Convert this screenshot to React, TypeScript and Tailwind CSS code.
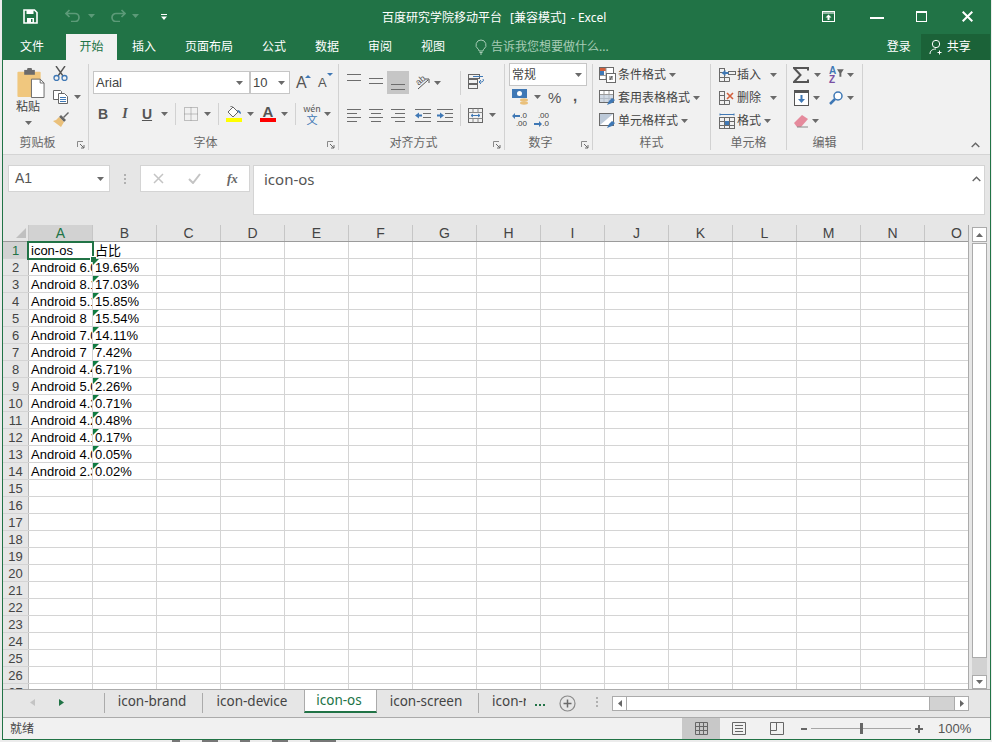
import type { ReactNode } from "react";

const colLetters = ["A", "B", "C", "D", "E", "F", "G", "H", "I", "J", "K", "L", "M", "N", "O"];

const rows = [
  ["icon-os", "占比"],
  ["Android 6.0", "19.65%"],
  ["Android 8.1", "17.03%"],
  ["Android 5.1", "15.85%"],
  ["Android 8", "15.54%"],
  ["Android 7.0", "14.11%"],
  ["Android 7", "7.42%"],
  ["Android 4.4", "6.71%"],
  ["Android 5.0", "2.26%"],
  ["Android 4.3", "0.71%"],
  ["Android 4.2", "0.48%"],
  ["Android 4.1", "0.17%"],
  ["Android 4.0", "0.05%"],
  ["Android 2.3", "0.02%"],
];

function Caret({ className = "", color = "#6a6a6a" }: { className?: string; color?: string }) {
  return (
    <svg width="7" height="4" viewBox="0 0 7 4" className={`shrink-0 ${className}`}>
      <path d="M0 0h7L3.5 4z" fill={color} />
    </svg>
  );
}

function Launcher() {
  return (
    <svg width="8" height="8" viewBox="0 0 8 8" className="absolute right-[3px] bottom-[1px]">
      <path d="M.5 6V.5H6" fill="none" stroke="#8a8a8a" />
      <path d="M3 3l4 4M4 7h3V4" fill="none" stroke="#6a6a6a" />
    </svg>
  );
}

function Lines({ widths, gap = 4, align = "start" }: { widths: number[]; gap?: number; align?: "start" | "center" | "end" }) {
  const w = Math.max(...widths);
  const h = (widths.length - 1) * gap + 1;
  return (
    <svg width={w} height={h} viewBox={`0 0 ${w} ${h}`} className="block">
      {widths.map((lw, i) => {
        const x = align === "start" ? 0 : align === "center" ? (w - lw) / 2 : w - lw;
        return <rect key={i} x={x} y={i * gap} width={lw} height="1" fill="#6d6d6d" />;
      })}
    </svg>
  );
}

function IndentIcon({ dir }: { dir: "left" | "right" }) {
  return (
    <svg width="16" height="13" viewBox="0 0 16 13">
      <path d="M0 .5h16M8 4.5h8M8 8.5h8M0 12.5h16" stroke="#6d6d6d" />
      {dir === "left" ? (
        <path d="M0 6.500l4-3v2h3v2H4v2z" fill="#3f78b5" />
      ) : (
        <path d="M7 6.500l-4-3v2H0v2h3v2z" fill="#3f78b5" />
      )}
    </svg>
  );
}

function Group({ width, children, label, launcher }: { width: string; children: ReactNode; label: string; launcher?: boolean }) {
  return (
    <div className={`relative h-[86px] shrink-0 border-r border-[#d2d2d2] ${width}`}>
      {children}
      <div
        className={`absolute left-0 right-0 bottom-0 h-[14px] flex items-center justify-center text-[12px] leading-none text-[#666666] ${
          launcher ? "pr-[16px]" : ""
        }`}
      >
        {label}
      </div>
      {launcher && <Launcher />}
    </div>
  );
}

function VSep({ h = "h-[22px]" }: { h?: string }) {
  return <div className={`w-px bg-[#d2d2d2] shrink-0 ${h}`} />;
}

function CellIcon({ kind }: { kind: "insert" | "delete" | "format" }) {
  return (
    <svg width="18" height="16" viewBox="0 0 18 16" className="shrink-0">
      <g fill="none" stroke="#6a6a6a">
        {kind === "format" ? (
          <>
            <rect x="1.5" y="4.5" width="15" height="11" />
            <path d="M1.5 8.5h15M1.500 12.5h15M6.5 4.5v11M11.5 4.500v11" />
          </>
        ) : (
          <>
            <rect x="1.5" y="1.5" width="5" height="4" />
            <rect x="1.5" y="10.5" width="5" height="4" />
            <path d="M1.5 6v4M6.500 6v4M6.5 10.5h5v4h-5" />
          </>
        )}
      </g>
      {kind === "insert" && (
        <>
          <rect x="10.5" y="4.5" width="7" height="3" fill="none" stroke="#6a6a6a" />
          <path d="M3.500 6l4-3v2h3v2h-3v2z" fill="#3f78b5" />
        </>
      )}
      {kind === "delete" && <path d="M9 3l6 6M15 3l-6 6" stroke="#d2603c" strokeWidth="1.6" />}
      {kind === "format" && (
        <>
          <rect x="7" y="8" width="4" height="4" fill="#3f78b5" />
          <path d="M2 1.500h14M2 .5v2M16 .5v2" stroke="#3f78b5" />
        </>
      )}
    </svg>
  );
}

function StyleIcon({ kind }: { kind: "cond" | "table" | "cell" }) {
  return (
    <svg width="17" height="16" viewBox="0 0 17 16" className="shrink-0">
      <rect x=".5" y=".5" width="14" height="12" fill="#fff" stroke="#6a6a6a" />
      {kind === "cond" && (
        <>
          <rect x="1" y="1" width="6" height="3" fill="#d2603c" />
          <rect x="1" y="4" width="4" height="4" fill="#3f78b5" />
          <path d="M1 8.500h12M7 1v11" stroke="#9a9a9a" />
          <rect x="7.5" y="6.5" width="9" height="9" fill="#fff" stroke="#6a6a6a" />
          <path d="M10 10h4M10 12h4M13 9l-2 4" stroke="#555" />
        </>
      )}
      {kind === "table" && (
        <>
          <path d="M1 4.500h13M1 8.500h13M5 1v11M10 1v11" stroke="#9a9a9a" />
          <path d="M1 5h13v7H1z" fill="#bcc9d8" opacity=".7" />
          <path d="M8 15l2-4 3-3 3 2-3 3z" fill="#3f78b5" />
        </>
      )}
      {kind === "cell" && (
        <>
          <path d="M1 1h13L1 12z" fill="#bcc9d8" />
          <path d="M8 15l2-4 3-3 3 2-3 3z" fill="#3f78b5" />
        </>
      )}
    </svg>
  );
}

function TitleBar() {
  return (
    <div className="h-[34px] bg-[#217346] flex items-center text-white shrink-0">
      <svg width="15" height="15" viewBox="0 0 15 15" className="ml-[20px] mb-[2px]">
        <path d="M1 1h10.500L14 3.500V14H1z" fill="none" stroke="#fff" strokeWidth="1.6" />
        <rect x="3.5" y="1" width="7" height="4" fill="#fff" />
        <rect x="4" y="9" width="7" height="5" fill="#fff" />
        <rect x="8" y="10" width="1.5" height="3" fill="#217346" />
      </svg>
      <svg width="16" height="13" viewBox="0 0 16 13" className="ml-[27px] mb-[3px]">
        <path d="M4.500 1L1 4.500 4.500 8M1.500 4.500H10a4 4 0 0 1 0 8H6" fill="none" stroke="#5c9a78" strokeWidth="1.7" />
      </svg>
      <Caret color="#5c9a78" className="ml-[7px] mb-[2px]" />
      <svg width="16" height="13" viewBox="0 0 16 13" className="ml-[15px] mb-[3px]">
        <path d="M11.500 1L15 4.500 11.500 8M14.500 4.500H6a4 4 0 0 0 0 8h4" fill="none" stroke="#5c9a78" strokeWidth="1.7" />
      </svg>
      <Caret color="#5c9a78" className="ml-[6px] mb-[2px]" />
      <svg width="6" height="6" viewBox="0 0 6 6" className="ml-[22px] mb-[1px]">
        <rect width="6" height="1" fill="#fff" />
        <path d="M0 2.500h6L3 6z" fill="#fff" />
      </svg>
      <div className="ml-[215px] w-[226px] mt-px flex text-[12px] whitespace-nowrap leading-none">
        <span>百度研究学院移动平台</span>
        <span className="ml-[8px]">[兼容模式]</span>
        <span className="ml-[5px]">- Excel</span>
      </div>
      <svg width="13" height="11" viewBox="0 0 13 11" className="ml-[214px] mb-[2px]">
        <rect x=".5" y=".5" width="12" height="10" fill="none" stroke="#fff" />
        <path d="M1 2h11" stroke="#fff" />
        <path d="M6.500 3.500L3.500 6.500h2V9h2V6.500h2z" fill="#fff" />
      </svg>
      <div className="ml-[35px] w-[14px] h-[2px] bg-white mt-[1px]" />
      <svg width="11" height="11" viewBox="0 0 11 11" className="ml-[32px] mb-[2px]">
        <rect x=".5" y=".5" width="10" height="10" fill="none" stroke="#fff" />
        <rect x="0" y="0" width="11" height="2" fill="#fff" />
      </svg>
      <svg width="11" height="11" viewBox="0 0 11 11" className="ml-[35px] mb-[2px]">
        <path d="M.7.7l9.600 9.600M10.300.7L.7 10.300" stroke="#fff" strokeWidth="2" />
      </svg>
    </div>
  );
}

function TabsRow() {
  const tabs: [string, string][] = [
    ["插入", "ml-[15px]"],
    ["页面布局", "ml-[29px]"],
    ["公式", "ml-[29px]"],
    ["数据", "ml-[29px]"],
    ["审阅", "ml-[29px]"],
    ["视图", "ml-[29px]"],
  ];
  return (
    <div className="h-[26px] bg-[#217346] flex items-center text-white text-[12px] leading-none shrink-0">
      <span className="ml-[17px]">文件</span>
      <div className="ml-[22px] w-[51px] h-[26px] bg-[#f1f1f1] text-[#217346] flex items-center justify-center">开始</div>
      {tabs.map(([t, m]) => (
        <span key={t} className={m}>{t}</span>
      ))}
      <svg width="12" height="16" viewBox="0 0 12 16" className="ml-[30px]">
        <path d="M6 1a5 5 0 0 1 3 9c-.6.5-1 1-1 2H4c0-1-.4-1.500-1-2a5 5 0 0 1 3-9z" fill="none" stroke="#a7ccb6" />
        <path d="M4.500 13.500h3M5 15h2" stroke="#a7ccb6" />
      </svg>
      <span className="ml-[4px] text-[#a7ccb6]">告诉我您想要做什么...</span>
      <span className="ml-[278px]">登录</span>
      <div className="ml-[10px] w-[69px] h-[26px] bg-[#1b6238] flex items-center">
        <svg width="15" height="16" viewBox="0 0 15 16" className="ml-[8px]">
          <circle cx="7" cy="5" r="3.700" fill="none" stroke="#fff" />
          <path d="M1 15c0-3 2-5 6-5M10.500 11.500v4M8.500 13.500h4" fill="none" stroke="#fff" />
        </svg>
        <span className="ml-[3px]">共享</span>
      </div>
    </div>
  );
}

function ClipboardGroup() {
  return (
    <Group width="w-[86px]" label="剪贴板" launcher>
      <div className="flex pl-[13px]">
        <div className="flex flex-col items-start w-[28px] pt-[4px]">
          <svg width="29" height="30" viewBox="0 0 29 31" className="shrink-0">
            <rect x="1" y="4" width="24" height="26" rx="1" fill="#f0c77e" />
            <rect x="8" y="2" width="11" height="5" fill="#6b6b6b" />
            <rect x="11" y="0" width="5" height="4" rx="1" fill="#6b6b6b" />
            <path d="M15.500 11.500h9l4 4v15h-13z" fill="#fff" stroke="#6b6b6b" />
            <path d="M24.500 11.500v4h4" fill="none" stroke="#6b6b6b" />
          </svg>
          <span className="text-[12px] leading-none text-[#444] whitespace-nowrap mt-[3px]">粘贴</span>
          <Caret className="mt-[8px] ml-[9px]" />
        </div>
        <div className="flex flex-col items-start ml-[9px] pt-[2px]">
          <svg width="15" height="15" viewBox="0 0 15 15">
            <path d="M3 0l7 10M12 0L5 10" stroke="#555" strokeWidth="1.4" />
            <circle cx="3.5" cy="12" r="2.500" fill="none" stroke="#3f78b5" strokeWidth="1.3" />
            <circle cx="11.5" cy="12" r="2.500" fill="none" stroke="#3f78b5" strokeWidth="1.3" />
          </svg>
          <div className="flex items-center mt-[9px]">
            <svg width="15" height="14" viewBox="0 0 15 14">
              <path d="M.5.5h7l1 1v8h-8z" fill="#fff" stroke="#666" />
              <path d="M5.500 3.500h6l3 3v7h-9z" fill="#fff" stroke="#666" />
              <path d="M7 7.500h6M7 9.500h6M7 11.500h6" stroke="#3f78b5" />
            </svg>
            <Caret className="ml-[6px]" />
          </div>
          <svg width="16" height="15" viewBox="0 0 16 15" className="mt-[8px]">
            <path d="M10 5l5-5 1 1-5 5z" fill="#666" />
            <path d="M8 3l5 5-2 2-5-5z" fill="#666" />
            <path d="M6 5l5 5-3 5-8-6 3-1z" fill="#eac07a" />
          </svg>
        </div>
      </div>
    </Group>
  );
}

function FontGroup() {
  return (
    <Group width="w-[250px]" label="字体" launcher>
      <div className="flex items-center pt-[7px] pl-[4px]">
        <div className="w-[157px] h-[23px] bg-white border border-[#c6c6c6] flex items-center justify-between pl-[2px] pr-[6px] text-[#444] text-[13px] font-['Liberation_Sans',sans-serif]">
          Arial
          <Caret />
        </div>
        <div className="w-[40px] h-[23px] bg-white border border-[#c6c6c6] flex items-center justify-between pl-[2px] pr-[4px] text-[#444] text-[13px] font-['Liberation_Sans',sans-serif]">
          10
          <Caret />
        </div>
        <span className="relative ml-[6px] w-[15px] text-[#555] text-[16px] leading-none font-['Liberation_Sans',sans-serif]">
          A
          <svg width="6" height="3" viewBox="0 0 6 3" className="absolute left-[9px] top-[0px]"><path d="M0 3h6L3 0z" fill="#3f78b5" /></svg>
        </span>
        <span className="relative ml-[7px] w-[15px] text-[#555] text-[13px] leading-none font-['Liberation_Sans',sans-serif]">
          A
          <svg width="6" height="3" viewBox="0 0 6 3" className="absolute left-[9px] -top-[3px]"><path d="M0 0h6L3 3z" fill="#3f78b5" /></svg>
        </span>
      </div>
      <div className="flex items-center h-[24px] mt-[8px] pl-[3px] text-[#555] text-[14px] font-['Liberation_Sans',sans-serif] leading-none">
        <span className="w-[22px] text-center font-bold">B</span>
        <span className="w-[22px] text-center italic font-['Liberation_Serif',serif] font-bold">I</span>
        <span className="w-[22px] text-center font-bold underline">U</span>
        <Caret className="ml-[3px]" />
        <div className="ml-[7px]"><VSep /></div>
        <svg width="14" height="14" viewBox="0 0 14 14" className="ml-[8px]">
          <path d="M.5.5h13v13H.5zM7 .5v13M.5 7h13" fill="none" stroke="#8a8a8a" strokeDasharray="1 1" />
        </svg>
        <Caret className="ml-[6px]" />
        <div className="ml-[7px]"><VSep /></div>
        <div className="ml-[7px] w-[16px] flex flex-col items-center">
          <svg width="16" height="12" viewBox="0 0 16 12">
            <path d="M2 6l5-5 5 5-5 5z" fill="#fff" stroke="#666" />
            <path d="M5 1V0h2" fill="none" stroke="#666" />
            <path d="M11 4c3 0 4 2 4 4l-2-1z" fill="#3f78b5" />
          </svg>
          <div className="w-[16px] h-[4px] bg-[#ffff00]" />
        </div>
        <Caret className="ml-[5px]" />
        <div className="ml-[6px] w-[16px] flex flex-col items-center">
          <span className="text-[15px] leading-[12px] font-bold text-[#555]">A</span>
          <div className="w-[16px] h-[4px] bg-[#ff0000]" />
        </div>
        <Caret className="ml-[5px]" />
        <div className="ml-[7px]"><VSep /></div>
        <div className="ml-[8px] w-[16px] flex flex-col items-center text-[9px] leading-[10px] text-[#555] font-['Noto_Sans_CJK_SC',sans-serif]">
          <span>wén</span>
          <span className="text-[#3f78b5] text-[11px]">文</span>
        </div>
        <Caret className="ml-[4px]" />
      </div>
    </Group>
  );
}

function AlignGroup() {
  return (
    <Group width="w-[166px]" label="对齐方式" launcher>
      <div className="flex pl-[8px] pt-[7px]">
        <div className="w-[22px] pt-[3px]"><Lines widths={[14, 14]} gap={6} /></div>
        <div className="w-[18px] pt-[7px]"><Lines widths={[14, 14]} gap={5} /></div>
        <div className="w-[22px] h-[23px] bg-[#c6c6c6] flex items-start justify-center pt-[13px]"><Lines widths={[14, 14]} gap={5} /></div>
        <div className="ml-[6px] flex items-center h-[23px]">
          <svg width="15" height="15" viewBox="0 0 15 15" className="overflow-visible">
            <text x="1" y="8" fontSize="9" fill="#555" transform="rotate(-40 6 6)" fontFamily="Liberation Sans">ab</text>
            <path d="M3 14l10-9M10 4h4v4" fill="none" stroke="#555" />
          </svg>
          <Caret className="ml-[4px]" />
        </div>
        <div className="ml-[19px]"><VSep h="h-[24px]" /></div>
        <svg width="16" height="15" viewBox="0 0 16 15" className="ml-[7px] mt-[3px]">
          <rect x=".5" y=".5" width="11" height="4" fill="none" stroke="#666" />
          <rect x=".5" y="5.5" width="9" height="4" fill="none" stroke="#666" />
          <rect x=".5" y="10.5" width="9" height="4" fill="none" stroke="#666" />
          <path d="M11 8h3a2 2 0 0 0 1-3M13 6l-2 2 2 2M5 2.500h10" fill="none" stroke="#3f78b5" />
        </svg>
      </div>
      <div className="flex items-center pl-[8px] h-[24px] mt-[8px]">
        <div className="w-[22px]"><Lines widths={[14, 10, 14, 10]} /></div>
        <div className="w-[22px]"><Lines widths={[14, 10, 14, 10]} align="center" /></div>
        <div className="w-[24px]"><Lines widths={[14, 10, 14, 10]} align="end" /></div>
        <IndentIcon dir="left" />
        <div className="ml-[6px]"><IndentIcon dir="right" /></div>
        <div className="ml-[7px]"><VSep /></div>
        <svg width="15" height="15" viewBox="0 0 15 15" className="ml-[7px]">
          <rect x=".5" y=".5" width="14" height="14" fill="none" stroke="#666" />
          <path d="M.5 4.500h14M.5 10.500h14M5 10.500v4M10 10.500v4M5 .5v4M10 .5v4" stroke="#888" />
          <path d="M3 7.500h9M3 7.500l2-1.500M3 7.500l2 1.500M12 7.500l-2-1.500M12 7.500l-2 1.500" stroke="#3f78b5" />
        </svg>
        <Caret className="ml-[6px]" />
      </div>
    </Group>
  );
}

function NumberGroup() {
  return (
    <Group width="w-[88px]" label="数字" launcher>
      <div className="pl-[4px] -mt-px">
        <div className="w-[78px] h-[23px] bg-white border border-[#c6c6c6] flex items-center justify-between pl-[2px] pr-[4px] text-[12px] text-[#444]">
          常规
          <Caret />
        </div>
        <div className="flex items-center h-[16px] mt-[3px] pl-[3px]">
          <svg width="17" height="16" viewBox="0 0 17 16">
            <rect x="0" y="0" width="15" height="9" fill="#3f78b5" />
            <circle cx="7.5" cy="4.5" r="2.500" fill="#fff" />
            <ellipse cx="12" cy="11" rx="4" ry="1.700" fill="#eac07a" />
            <ellipse cx="12" cy="14" rx="4" ry="1.700" fill="#eac07a" />
          </svg>
          <Caret className="ml-[5px]" />
          <span className="ml-[7px] w-[14px] text-[15px] leading-none text-[#555] font-['Liberation_Sans',sans-serif]">%</span>
          <span className="ml-[11px] text-[15px] leading-none font-bold text-[#555] font-['Liberation_Sans',sans-serif] mb-[4px]">,</span>
        </div>
        <div className="flex items-center mt-[7px] pl-[3px] gap-[7px]">
          <div className="relative w-[15px] text-[8px] leading-[8px] font-['Liberation_Sans',sans-serif] text-[#444] text-right">
            <svg width="8" height="6" viewBox="0 0 8 6" className="absolute left-0 top-[1px]"><path d="M0 3l3-3v2h5v2H3v2z" fill="#3f78b5" /></svg>
            <div>.0</div>
            <div>.00</div>
          </div>
          <div className="relative w-[15px] text-[8px] leading-[8px] font-['Liberation_Sans',sans-serif] text-[#444] text-right">
            <svg width="8" height="6" viewBox="0 0 8 6" className="absolute left-0 top-[9px]"><path d="M8 3L5 0v2H0v2h5v2z" fill="#3f78b5" /></svg>
            <div>.00</div>
            <div>.0</div>
          </div>
        </div>
      </div>
    </Group>
  );
}

function StylesGroup() {
  const items: ["cond" | "table" | "cell", string][] = [
    ["cond", "条件格式"],
    ["table", "套用表格格式"],
    ["cell", "单元格样式"],
  ];
  return (
    <Group width="w-[118px]" label="样式">
      <div className="flex flex-col pl-[6px] pt-[3px] gap-[7px]">
        {items.map(([k, t]) => (
          <div key={k} className="flex items-center h-[16px] text-[12px] leading-none text-[#444]">
            <StyleIcon kind={k} />
            <span className="ml-[2px]">{t}</span>
            <Caret className="ml-[3px]" />
          </div>
        ))}
      </div>
    </Group>
  );
}

function CellsGroup() {
  const items: ["insert" | "delete" | "format", string, string][] = [
    ["insert", "插入", "ml-[9px]"],
    ["delete", "删除", "ml-[9px]"],
    ["format", "格式", "ml-[3px]"],
  ];
  return (
    <Group width="w-[76px]" label="单元格">
      <div className="flex flex-col pl-[7px] pt-[3px] gap-[7px]">
        {items.map(([k, t, m]) => (
          <div key={k} className="flex items-center h-[16px] text-[12px] leading-none text-[#444]">
            <CellIcon kind={k} />
            <span className="ml-px">{t}</span>
            <Caret className={m} />
          </div>
        ))}
      </div>
    </Group>
  );
}

function EditGroup() {
  return (
    <Group width="w-[76px]" label="编辑">
      <div className="flex flex-col pl-[6px] pt-[2px] gap-[7px]">
        <div className="flex items-center h-[17px]">
          <svg width="16" height="16" viewBox="0 0 16 16">
            <path d="M15 3.500V1H1l6.500 7L1 15h14v-2.500" fill="none" stroke="#555" strokeWidth="2" />
          </svg>
          <Caret className="ml-[5px]" />
          <div className="ml-[8px] w-[15px] flex text-[10px] leading-[9px] font-bold font-['Liberation_Sans',sans-serif]">
            <div className="flex flex-col"><span className="text-[#3f78b5]">A</span><span className="text-[#7a4fa3]">Z</span></div>
            <svg width="7" height="8" viewBox="0 0 7 8" className="ml-px mt-[3px]"><path d="M0 0h7L4.500 4v4h-2V4z" fill="#666" /></svg>
          </div>
          <Caret className="ml-[3px]" />
        </div>
        <div className="flex items-center h-[16px]">
          <svg width="15" height="16" viewBox="0 0 15 16" className="ml-px">
            <rect x=".5" y=".5" width="14" height="15" fill="#fff" stroke="#555" />
            <path d="M1 1h13v2H1z" fill="#555" />
            <path d="M6.500 5h2v4H11l-3.500 4L4 9h2.500z" fill="#3f78b5" />
          </svg>
          <Caret className="ml-[4px]" />
          <svg width="14" height="14" viewBox="0 0 14 14" className="ml-[9px]">
            <circle cx="9" cy="5" r="4" fill="#fff" stroke="#3f78b5" strokeWidth="1.5" />
            <path d="M6 8l-5 5" stroke="#3f78b5" strokeWidth="2.5" />
          </svg>
          <Caret className="ml-[4px]" />
        </div>
        <div className="flex items-center h-[15px]">
          <svg width="15" height="14" viewBox="0 0 15 14" className="ml-px">
            <path d="M0 9l8-8 6 4-7 8H3z" fill="#e58a9c" />
            <path d="M3 13h11" stroke="#888" />
          </svg>
          <Caret className="ml-[3px]" />
        </div>
      </div>
    </Group>
  );
}

function Ribbon() {
  return (
    <div className="relative h-[95px] bg-[#f1f1f1] border-b border-[#d4d4d4] shrink-0 text-[#444] pt-[4px]">
      <div className="flex">
        <ClipboardGroup />
        <FontGroup />
        <AlignGroup />
        <NumberGroup />
        <StylesGroup />
        <CellsGroup />
        <EditGroup />
      </div>
      <svg width="9" height="6" viewBox="0 0 9 6" className="absolute right-[10px] bottom-[6px]">
        <path d="M.7 5l3.800-3.800L8.300 5" fill="none" stroke="#666" strokeWidth="1.4" />
      </svg>
    </div>
  );
}

function FormulaBar() {
  return (
    <div className="h-[70px] flex pt-[10px] pl-[5px] shrink-0 bg-[#e6e6e6]">
      <div className="w-[102px] h-[27px] bg-white border border-[#d4d4d4] flex items-center justify-between pl-[6px] pr-[5px] text-[14px] text-[#555] font-['Liberation_Sans',sans-serif]">
        A1
        <Caret />
      </div>
      <div className="w-[30px] h-[27px] flex flex-col items-center justify-center gap-[2px]">
        <div className="w-[2px] h-[2px] bg-[#b0b0b0]" />
        <div className="w-[2px] h-[2px] bg-[#b0b0b0]" />
        <div className="w-[2px] h-[2px] bg-[#b0b0b0]" />
      </div>
      <div className="w-[110px] h-[27px] bg-white border border-[#d4d4d4] flex items-center pl-[12px]">
        <svg width="11" height="11" viewBox="0 0 11 11"><path d="M1 1l9 9M10 1l-9 9" stroke="#c4c4c4" strokeWidth="1.5" /></svg>
        <svg width="13" height="11" viewBox="0 0 13 11" className="ml-[24px]"><path d="M1 6l4 4 7-9" fill="none" stroke="#c4c4c4" strokeWidth="2" /></svg>
        <span className="ml-[26px] text-[13px] italic font-bold text-[#666] font-['Liberation_Serif',serif] leading-none">fx</span>
      </div>
      <div className="relative ml-[3px] w-[732px] h-[50px] bg-white border border-[#d4d4d4] pl-[10px] pt-[3px] text-[15px] text-[#555] font-['Noto_Sans',sans-serif] leading-[20px]">
        icon-os
        <svg width="9" height="6" viewBox="0 0 9 6" className="absolute right-[3px] top-[10px]">
          <path d="M.7 5l3.800-3.800L8.300 5" fill="none" stroke="#666" strokeWidth="1.4" />
        </svg>
      </div>
    </div>
  );
}

function Sheet() {
  const rowNums = Array.from({ length: 27 }, (_, i) => i + 1);
  return (
    <div className="relative flex-1 flex overflow-hidden bg-white min-h-0">
      <div className="w-[966px] shrink-0 overflow-hidden border-r border-[#ababab]">
        <div className="flex h-[17px] bg-[#e6e6e6] border-b border-[#9b9b9b]">
          <div className="w-[26px] shrink-0 border-r border-[#c6c6c6] relative">
            <svg width="10" height="10" viewBox="0 0 10 10" className="absolute right-[2px] bottom-[3px]"><path d="M10 0v10H0z" fill="#c0c0c0" /></svg>
          </div>
          {colLetters.map((c, i) => (
            <div
              key={c}
              className={`w-[64px] shrink-0 border-r border-[#c6c6c6] text-center text-[14px] leading-[17px] font-['Liberation_Sans',sans-serif] ${
                i === 0 ? "bg-[#d2d2d2] text-[#217346]" : "text-[#444]"
              }`}
            >
              {c}
            </div>
          ))}
        </div>
        {rowNums.map((n) => {
          const r = rows[n - 1];
          return (
            <div key={n} className="flex h-[17px] border-b border-[#d4d4d4] text-[13px] leading-[18px] text-black font-['Liberation_Sans','Noto_Sans_CJK_SC',sans-serif]">
              <div className={`w-[26px] shrink-0 border-r border-[#b8b8b8] text-center ${n === 1 ? "bg-[#d2d2d2] text-[#217346]" : "bg-[#e6e6e6] text-[#444]"}`}>{n}</div>
              {colLetters.map((c, i) => (
                <div key={c} className="relative w-[64px] shrink-0 border-r border-[#d4d4d4] whitespace-nowrap">
                  {r && i === 0 && <div className="overflow-hidden w-[63px] pl-[2px]">{r[0]}</div>}
                  {r && i === 1 && <div className="overflow-hidden pl-[2px]">{r[1]}</div>}
                  {r && i === 1 && n > 1 && (
                    <svg width="6" height="6" viewBox="0 0 6 6" className="absolute left-0 top-0"><path d="M0 0h6L0 6z" fill="#107c41" /></svg>
                  )}
                  {n === 1 && i === 0 && (
                    <div className="absolute -left-[2px] -top-px w-[67px] h-[19px] border-2 border-[#217346] z-10">
                      <div className="absolute -right-[4px] -bottom-[4px] w-[6px] h-[6px] bg-[#217346] border-l border-t border-white" />
                    </div>
                  )}
                </div>
              ))}
            </div>
          );
        })}
      </div>
      <div className="flex-1 bg-[#e6e6e6] flex flex-col pl-[3px] pt-[2px]">
        <div className="w-[15px] h-[15px] bg-white border border-[#ababab] flex items-center justify-center"><Caret className="rotate-180" /></div>
        <div className="w-[15px] h-[415px] bg-white border border-[#ababab] mt-px" />
        <div className="w-[15px] flex-1 bg-[#d2d2d2]" />
        <div className="w-[15px] h-[14px] bg-white border border-[#ababab] flex items-center justify-center"><Caret /></div>
      </div>
    </div>
  );
}

function SheetTabs() {
  return (
    <div className="h-[29px] flex bg-[#e6e6e6] border-t border-b border-[#ababab] shrink-0 text-[13.5px] leading-none text-[#444] font-['Noto_Sans',sans-serif]">
      <div className="w-[101px] shrink-0 flex items-center pb-[2px]">
        <svg width="5" height="7" viewBox="0 0 5 7" className="ml-[27px]"><path d="M5 0v7L0 3.5z" fill="#c4c4c4" /></svg>
        <svg width="5" height="7" viewBox="0 0 5 7" className="ml-[24px]"><path d="M0 0v7l5-3.500z" fill="#217346" /></svg>
      </div>
      <div className="w-[98px] shrink-0 h-[20px] mt-[3px] pb-[3px] pr-[3px] border-l border-[#ababab] flex items-center justify-center">icon-brand</div>
      <div className="w-[102px] shrink-0 h-[20px] mt-[3px] pb-[3px] pr-[3px] border-l border-[#ababab] flex items-center justify-center">icon-device</div>
      <div className="w-[73px] shrink-0 h-[24px] -mt-px pt-px pr-[3px] bg-white text-[#217346] border-x border-t border-[#ababab] border-b-2 border-b-[#217346] flex items-center justify-center">icon-os</div>
      <div className="w-[101px] shrink-0 h-[20px] mt-[3px] pb-[3px] pr-[3px] flex items-center justify-center">icon-screen</div>
      <div className="w-[48px] shrink-0 h-[20px] mt-[3px] pb-[3px] border-l border-[#ababab] flex items-center pl-[13px] overflow-hidden whitespace-nowrap">icon-resolution</div>
      <div className="ml-[9px] mt-[14px] flex gap-[2px] h-[2px]">
        <div className="w-[2px] h-[2px] bg-[#217346]" />
        <div className="w-[2px] h-[2px] bg-[#217346]" />
        <div className="w-[2px] h-[2px] bg-[#217346]" />
      </div>
      <svg width="17" height="17" viewBox="0 0 17 17" className="ml-[14px] mt-[5px]">
        <circle cx="8.5" cy="8.5" r="7.5" fill="none" stroke="#8a8a8a" strokeWidth="1.2" />
        <path d="M4.500 8.500h8M8.500 4.500v8" stroke="#6a6a6a" strokeWidth="1.5" />
      </svg>
      <div className="ml-[20px] mt-[7px] flex flex-col gap-[2px]">
        <div className="w-[2px] h-[2px] bg-[#b0b0b0]" />
        <div className="w-[2px] h-[2px] bg-[#b0b0b0]" />
        <div className="w-[2px] h-[2px] bg-[#b0b0b0]" />
      </div>
      <div className="ml-[14px] mt-[6px] w-[357px] h-[15px] flex border border-[#ababab] bg-[#d2d2d2]">
        <div className="w-[14px] bg-white border-r border-[#ababab] flex items-center justify-center">
          <svg width="4" height="7" viewBox="0 0 4 7"><path d="M4 0v7L0 3.5z" fill="#666" /></svg>
        </div>
        <div className="w-[303px] bg-white border-r border-[#ababab]" />
        <div className="flex-1" />
        <div className="w-[14px] bg-white border-l border-[#ababab] flex items-center justify-center">
          <svg width="4" height="7" viewBox="0 0 4 7"><path d="M0 0v7l4-3.500z" fill="#666" /></svg>
        </div>
      </div>
    </div>
  );
}

function StatusBar() {
  return (
    <div className="h-[21px] bg-[#f1f1f1] flex items-center shrink-0 text-[12px] text-[#444] leading-none">
      <span className="ml-[7px]">就绪</span>
      <div className="ml-[648px] w-[38px] h-[21px] bg-[#c8c8c8] flex items-center justify-center">
        <svg width="13" height="13" viewBox="0 0 13 13"><path d="M.5.5h12v12H.5zM.5 4.500h12M.5 8.500h12M4.500.5v12M8.500.5v12" fill="none" stroke="#666" /></svg>
      </div>
      <svg width="14" height="13" viewBox="0 0 14 13" className="ml-[12px]"><path d="M.5.5h13v12H.5z" fill="none" stroke="#666" /><path d="M3 3.500h8M3 6.500h8M3 9.500h8" stroke="#666" /></svg>
      <svg width="14" height="13" viewBox="0 0 14 13" className="ml-[24px]"><path d="M.5.5h13v12H.5zM.5 8.500h6V.5" fill="none" stroke="#666" /></svg>
      <div className="ml-[17px] w-[6px] h-[2px] bg-[#666]" />
      <div className="relative ml-[4px] w-[100px] h-px bg-[#a6a6a6]">
        <div className="absolute left-[49px] -top-[5px] w-[3px] h-[11px] bg-[#666]" />
      </div>
      <svg width="8" height="8" viewBox="0 0 8 8" className="ml-[4px]"><path d="M4 0v8M0 4h8" stroke="#666" strokeWidth="2" /></svg>
      <span className="ml-[15px] text-[13px] text-[#555] font-['Liberation_Sans',sans-serif]">100%</span>
    </div>
  );
}

export default function App() {
  return (
    <div className="w-[992px] h-[742px] bg-[#ececec] overflow-hidden font-['Noto_Sans','Noto_Sans_CJK_SC',sans-serif]">
      <div className="ml-[2px] w-[989px] h-[740px] flex flex-col border-x border-b border-[#217346] bg-[#e6e6e6]">
        <TitleBar />
        <TabsRow />
        <Ribbon />
        <FormulaBar />
        <Sheet />
        <SheetTabs />
        <StatusBar />
      </div>
      <div className="flex h-[2px] pl-[172px] gap-[22px]">
        <div className="w-[8px] bg-[#777]" />
        <div className="w-[16px] bg-[#777]" />
        <div className="w-[10px] bg-[#777]" />
        <div className="w-[16px] bg-[#777]" />
        <div className="w-[26px] bg-[#777]" />
      </div>
    </div>
  );
}
